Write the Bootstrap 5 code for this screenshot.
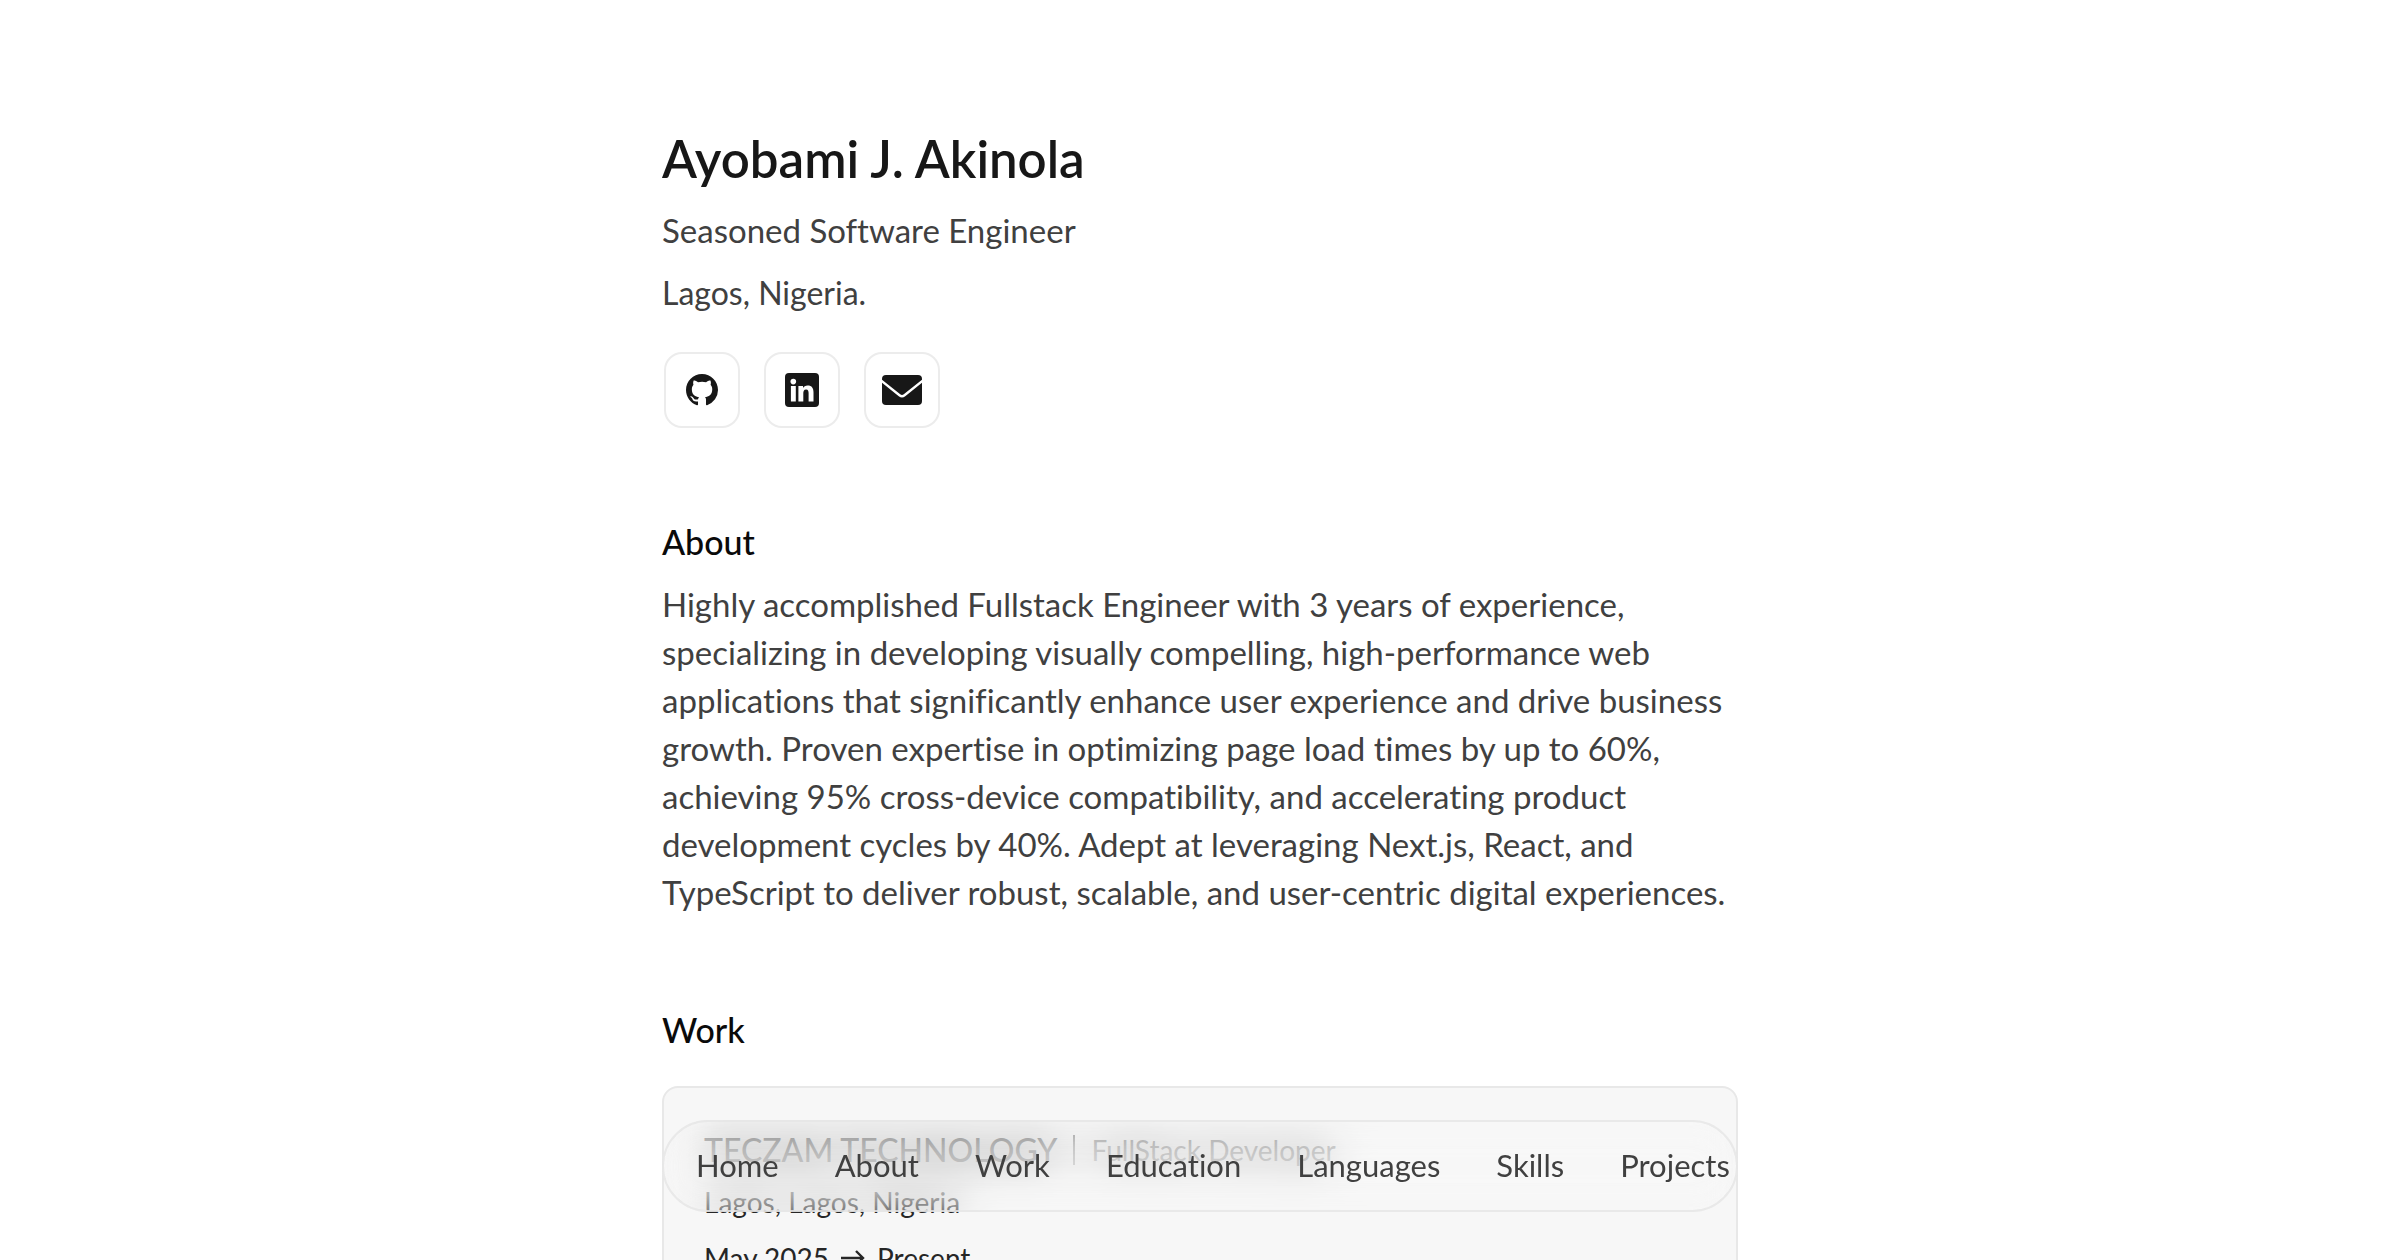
<!DOCTYPE html>
<html lang="en">
<head>
<meta charset="utf-8">
<meta name="viewport" content="width=device-width, initial-scale=1">
<title>Ayobami J. Akinola</title>
<link href="https://cdn.jsdelivr.net/npm/bootstrap@5.3.0/dist/css/bootstrap.min.css" rel="stylesheet">
<style>
  body { font-family: Lato, "Liberation Sans", sans-serif; font-variant-ligatures: none; color: #404040; background: #fff; font-size: 33px; line-height: 48px; }
  .page-col { max-width: 1076px; }
  .intro { padding-top: 129px; }
  .person { font-size: 51px; line-height: 60px; font-weight: 600; color: #171717; margin-bottom: 17px; }
  .role { margin-bottom: 15px; }
  .place { font-size: 32px; margin-bottom: 35px; }
  .social-row { padding-left: 2px; }
  .social { width: 76px; height: 76px; border: 2px solid #ececec; border-radius: 18px; color: #171717; }
  .block { padding-top: 90px; }
  .block-title { font-size: 34px; line-height: 48px; font-weight: 500; color: #0a0a0a; margin-bottom: 14px; }
  .work-title { margin-bottom: 32px; }
  .job { background: #f7f7f7; border: 2px solid #e8e8e8; border-radius: 16px; padding: 38px 40px; color: #262626; font-size: 28px; margin-bottom: 160px; }
  .job-name { font-size: 32px; line-height: 48px; font-weight: 500; }
  .job-sep { width: 2px; height: 30px; background: #404040; }
  .job-role { color: #404040; }
  .job-where { margin: 4px 0 8px; }
  .job-arrow { margin: 0 12px; }
  .dock { bottom: 48px; }
  .dock-pill { position: relative; height: 92px; padding: 0 0 2px 34px; gap: 56px; font-size: 31px; }
  .dock-pill::before { content: ""; position: absolute; inset: 0; border: 2px solid #e6e6e6; border-radius: 46px; background: rgba(255,255,255,.1); backdrop-filter: blur(20px); opacity: .84; }
  .dock-pill a { position: relative; color: #404040; text-decoration: none; white-space: nowrap; }
</style>
<script src="https://cdn.jsdelivr.net/npm/bootstrap@5.3.0/dist/js/bootstrap.bundle.min.js"></script>
</head>
<body>
<main class="container page-col px-0">
  <header class="intro">
    <h1 class="person">Ayobami J. Akinola</h1>
    <p class="role">Seasoned Software Engineer</p>
    <p class="place">Lagos, Nigeria.</p>
    <div class="social-row d-flex gap-4">
      <a class="social d-flex align-items-center justify-content-center" href="#" aria-label="GitHub">
        <svg width="32" height="32" viewBox="0 0 16 16" fill="currentColor"><path d="M8 0C3.58 0 0 3.58 0 8c0 3.54 2.29 6.53 5.47 7.59.4.07.55-.17.55-.38 0-.19-.01-.82-.01-1.49-2.01.37-2.53-.49-2.69-.94-.09-.23-.48-.94-.82-1.13-.28-.15-.68-.52-.01-.53.63-.01 1.08.58 1.23.82.72 1.21 1.87.87 2.33.66.07-.52.28-.87.51-1.07-1.78-.2-3.64-.89-3.64-3.95 0-.87.31-1.59.82-2.15-.08-.2-.36-1.02.08-2.12 0 0 .67-.21 2.2.82.64-.18 1.32-.27 2-.27s1.36.09 2 .27c1.53-1.04 2.2-.82 2.2-.82.44 1.1.16 1.92.08 2.12.51.56.82 1.27.82 2.15 0 3.07-1.87 3.75-3.65 3.95.29.25.54.73.54 1.48 0 1.07-.01 1.93-.01 2.2 0 .21.15.46.55.38A8.01 8.01 0 0 0 16 8c0-4.42-3.58-8-8-8z"/></svg>
      </a>
      <a class="social d-flex align-items-center justify-content-center" href="#" aria-label="LinkedIn">
        <svg width="34" height="34" viewBox="0 0 34 34"><rect width="34" height="34" rx="4" fill="currentColor"/><g fill="#fff"><circle cx="8.3" cy="8.6" r="2.8"/><path d="M5.9 13h4.9v15.5H5.9zM13.4 13H18v2.1c.8-1.4 2.4-2.5 4.5-2.5 4.6 0 6 2.7 6 7v8.900h-4.900v-7.900c0-2.100-.3-4-2.500-4-2.300 0-2.800 1.900-2.800 4v7.900h-4.900z"/></g></svg>
      </a>
      <a class="social d-flex align-items-center justify-content-center" href="#" aria-label="Email">
        <svg width="40" height="30" viewBox="0 0 40 30"><rect width="40" height="30" rx="4" fill="currentColor"/><path d="M-1 5.500 17.500 20.300q2.500 2 5 0L41 5.500" fill="none" stroke="#fff" stroke-width="2.400"/></svg>
      </a>
    </div>
  </header>

  <section class="block" id="about">
    <h2 class="block-title">About</h2>
    <p class="mb-0">Highly accomplished Fullstack Engineer with 3 years of experience, specializing in developing visually compelling, high-performance web applications that significantly enhance user experience and drive business growth. Proven expertise in optimizing page load times by up to 60%, achieving 95% cross-device compatibility, and accelerating product development cycles by 40%. Adept at leveraging Next.js, React, and TypeScript to deliver robust, scalable, and user-centric digital experiences.</p>
  </section>

  <section class="block" id="work">
    <h2 class="block-title work-title">Work</h2>
    <article class="job">
      <div class="d-flex align-items-center gap-3">
        <h3 class="job-name mb-0">TECZAM TECHNOLOGY</h3>
        <span class="job-sep"></span>
        <span class="job-role">FullStack Developer</span>
      </div>
      <p class="job-where">Lagos, Lagos, Nigeria</p>
      <div class="d-flex align-items-center">
        <span>May 2025</span>
        <svg class="job-arrow" width="24" height="18" viewBox="0 0 24 18" fill="none" stroke="currentColor" stroke-width="2.400"><path d="M0 9h22M15 2l7 7-7 7"/></svg>
        <span>Present</span>
      </div>
    </article>
  </section>
</main>

<nav class="dock position-fixed start-0 end-0" aria-label="Sections">
  <div class="container page-col px-0">
    <div class="dock-pill d-flex align-items-center">
      <a href="#">Home</a>
      <a href="#about">About</a>
      <a href="#work">Work</a>
      <a href="#education">Education</a>
      <a href="#languages">Languages</a>
      <a href="#skills">Skills</a>
      <a href="#projects">Projects</a>
    </div>
  </div>
</nav>
</body>
</html>
